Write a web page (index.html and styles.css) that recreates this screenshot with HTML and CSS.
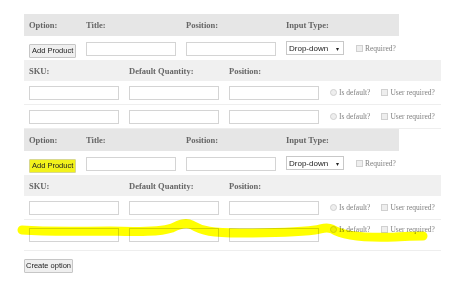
FILE: index.html
```html
<!DOCTYPE html>
<html lang="en">
<head>
    <meta charset="UTF-8">
    <meta name="viewport" content="width=device-width, initial-scale=1.0">
    <title>Product Options</title>
    <link rel="stylesheet" href="styles.css">
</head>
<body>
    <div class="page">
        <div class="option">
            <div class="option-head">
                <span class="cell first">Option:</span>
                <span class="cell">Title:</span>
                <span class="cell">Position:</span>
                <span class="cell">Input Type:</span>
            </div>
            <div class="option-row">
                <div class="cell first"><button class="btn">Add Product</button></div>
                <div class="cell"><input type="text"></div>
                <div class="cell"><input type="text"></div>
                <div class="cell check-cell">
                    <div class="select">Drop-down<span class="arrow">&#9662;</span></div>
                    <label class="check"><span class="box"></span>Required?</label>
                </div>
            </div>
            <div class="sku-head">
                <span class="cell">SKU:</span>
                <span class="cell">Default Quantity:</span>
                <span class="cell">Position:</span>
            </div>
            <div class="sku-row">
                <div class="cell"><input type="text"></div>
                <div class="cell"><input type="text"></div>
                <div class="cell"><input type="text"></div>
                <div class="cell check-cell">
                    <label class="check"><span class="dot"></span>Is default?</label>
                    <label class="check"><span class="box"></span>User required?</label>
                </div>
            </div>
            <div class="sku-row">
                <div class="cell"><input type="text"></div>
                <div class="cell"><input type="text"></div>
                <div class="cell"><input type="text"></div>
                <div class="cell check-cell">
                    <label class="check"><span class="dot"></span>Is default?</label>
                    <label class="check"><span class="box"></span>User required?</label>
                </div>
            </div>
        </div>

        <div class="option">
            <div class="option-head">
                <span class="cell first">Option:</span>
                <span class="cell">Title:</span>
                <span class="cell">Position:</span>
                <span class="cell">Input Type:</span>
            </div>
            <div class="option-row">
                <div class="cell first"><button class="btn marked">Add Product</button></div>
                <div class="cell"><input type="text"></div>
                <div class="cell"><input type="text"></div>
                <div class="cell check-cell">
                    <div class="select">Drop-down<span class="arrow">&#9662;</span></div>
                    <label class="check"><span class="box"></span>Required?</label>
                </div>
            </div>
            <div class="sku-head">
                <span class="cell">SKU:</span>
                <span class="cell">Default Quantity:</span>
                <span class="cell">Position:</span>
            </div>
            <div class="sku-row">
                <div class="cell"><input type="text"></div>
                <div class="cell"><input type="text"></div>
                <div class="cell"><input type="text"></div>
                <div class="cell check-cell">
                    <label class="check"><span class="dot"></span>Is default?</label>
                    <label class="check"><span class="box"></span>User required?</label>
                </div>
            </div>
            <div class="sku-row last">
                <div class="cell"><input type="text"></div>
                <div class="cell"><input type="text"></div>
                <div class="cell"><input type="text"></div>
                <div class="cell check-cell">
                    <label class="check"><span class="dot"></span>Is default?</label>
                    <label class="check"><span class="box"></span>User required?</label>
                </div>
            </div>
        </div>

        <div class="footer">
            <button class="btn">Create option</button>
        </div>
    </div>

    <!-- highlighter scribble drawn over the page -->
    <svg class="scribble" width="474" height="287" viewBox="0 0 474 287">
        <path d="M22 230 C 50 232, 80 231, 110 231 C 140 232, 160 232, 172 228 C 180 224, 186 222, 192 225 C 202 231, 212 233, 240 233 C 270 233, 300 232, 315 230 C 322 229, 326 226, 332 229 C 345 237, 370 238, 395 237 C 410 236, 418 236, 423 236"
              fill="none" stroke="#ffff00" stroke-width="9" stroke-linecap="round" stroke-linejoin="round"/>
    </svg>
</body>
</html>
```

FILE: styles.css
```css
body {
    margin: 0;
    background: #fff;
    font-family: "Liberation Serif", serif;
}

.page {
    padding: 14px 0 0 24px;
}

.cell {
    box-sizing: border-box;
    flex-shrink: 0;
    width: 100px;
    padding-left: 5px;
}

.cell.first {
    width: 57px;
}

.option-head,
.sku-head {
    display: flex;
    align-items: center;
    height: 22px;
    font-size: 8.5px;
    font-weight: bold;
    color: #666;
}

.option-head {
    width: 375px;
    background: #e6e6e6;
}

.sku-head {
    width: 417px;
    height: 21px;
    background: #f0f0f0;
}

.option-row {
    display: flex;
    align-items: center;
    height: 24px;
}

.sku-row {
    display: flex;
    align-items: center;
    width: 417px;
    height: 23px;
    border-bottom: 1px solid #eee;
}

.sku-row.last {
    box-sizing: border-box;
    height: 31px;
    padding-top: 5px;
    align-items: flex-start;
}

input[type="text"] {
    box-sizing: border-box;
    width: 90px;
    height: 14px;
    margin: 0;
    padding: 0;
    border: 1px solid #d4d4d4;
    background: #fff;
}

.select {
    box-sizing: border-box;
    display: flex;
    align-items: center;
    justify-content: space-between;
    width: 58px;
    height: 14px;
    padding: 0 4px 0 2px;
    border: 1px solid #c8c8c8;
    background: #fff;
    font-family: "Liberation Sans", Arial, sans-serif;
    font-size: 8px;
    color: #222;
}

.arrow {
    font-size: 6px;
}

.check-cell {
    display: flex;
    align-items: center;
    width: auto;
    white-space: nowrap;
}

.check {
    display: flex;
    align-items: center;
    margin-left: 12px;
    font-size: 7.5px;
    color: #808080;
}

.sku-row .check:first-child {
    margin-left: 1px;
}

.sku-row .check + .check {
    margin-left: 11px;
}

.box,
.dot {
    width: 5px;
    height: 5px;
    margin-right: 2px;
    border: 1px solid #d0d0d0;
    background: #eee;
}

.dot {
    border-radius: 50%;
}

.btn {
    height: 14px;
    padding: 0 2px;
    border: 1px solid #c6c6c6;
    border-radius: 1px;
    background: #efefef;
    font-family: "Liberation Sans", Arial, sans-serif;
    font-size: 7.5px;
    color: #222;
    line-height: 12px;
    white-space: nowrap;
}

.btn.marked {
    background: #f2f21c;
    border-color: #d8d890;
}

.footer {
    display: flex;
    padding-top: 8px;
}

.footer .btn {
    width: 49px;
    padding: 0;
}

.scribble {
    position: absolute;
    left: 0;
    top: 0;
    pointer-events: none;
    mix-blend-mode: multiply;
}
```
